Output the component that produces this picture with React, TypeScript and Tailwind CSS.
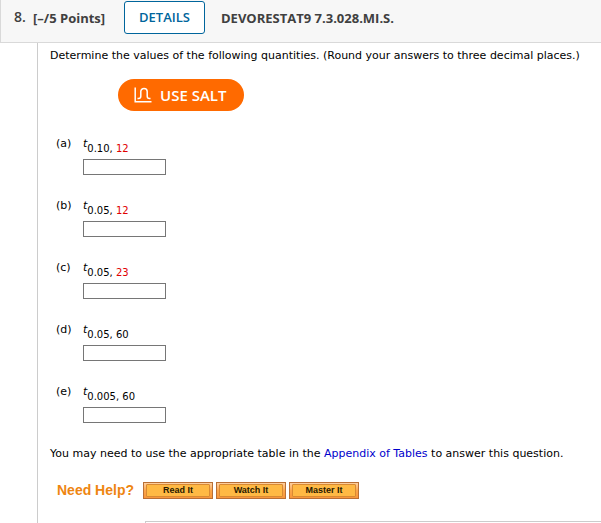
import { useId } from "react";

type Part = {
  label: string;
  alpha: string;
  df: string;
  randomized?: boolean;
};

const parts: Part[] = [
  { label: "a", alpha: "0.10", df: "12", randomized: true },
  { label: "b", alpha: "0.05", df: "12", randomized: true },
  { label: "c", alpha: "0.05", df: "23", randomized: true },
  { label: "d", alpha: "0.05", df: "60" },
  { label: "e", alpha: "0.005", df: "60" },
];

const helpLinks = ["Read It", "Watch It", "Master It"];

function CurveIcon() {
  return (
    <svg
      className="mb-px h-4 w-[18px]"
      viewBox="0 0 18 16"
      fill="none"
      stroke="currentColor"
      strokeWidth="1.5"
      aria-hidden
    >
      <path d="M1.2 0.5v14.3H17.5" />
      <path d="M3.5 11.5h1c1.600 0 2.300-.8 2.300-2.300V4.600C6.800 2.700 8.200 1.500 10 1.500s3.200 1.200 3.200 3.100v4.600c0 1.500.7 2.300 2.300 2.300h1" />
    </svg>
  );
}

function QuestionHeader() {
  return (
    <header className="flex h-[43px] items-start border-b border-l border-[#d9d9d9] bg-[#f7f7f7] pt-px pl-[13px] font-['Open_Sans',sans-serif] text-[13px] font-bold text-[#404040]">
      <span className="w-[19px] text-[14px] leading-8 font-semibold">8.</span>
      <span className="w-[91px] leading-[34px]">[–/5 Points]</span>
      <button
        type="button"
        className="h-[33px] w-[81px] rounded-[3px] border border-[#00659c] bg-white pt-px text-[13px] font-semibold text-[#00659c]"
      >
        DETAILS
      </button>
      <h1 className="ml-4 leading-[34px]">DEVORESTAT9 7.3.028.MI.S.</h1>
    </header>
  );
}

function AnswerPart({ label, alpha, df, randomized }: Part) {
  const id = useId();
  return (
    <div className="flex h-[62px]">
      <label htmlFor={id} className="w-[27px] leading-4">
        ({label})
      </label>
      <div>
        <div className="flex h-[23px] leading-4">
          <i>t</i>
          <sub className="bottom-0 pt-[5px] text-[10px] leading-4">
            {alpha}, <span className={randomized ? "text-[#e00000]" : ""}>{df}</span>
          </sub>
        </div>
        <input id={id} type="text" className="block h-4 w-[83px] border border-[#767676] bg-white px-1 text-[11px]" />
      </div>
    </div>
  );
}

function HelpButton({ text }: { text: string }) {
  return (
    <button
      type="button"
      className="h-[17px] w-[70px] border border-[#b96f35] bg-[#f9a040] bg-linear-to-b from-[#fdd0a0] via-[#fba64a] to-[#f9963a] p-px font-['Liberation_Sans',Arial,sans-serif] text-[9px] leading-[11px] font-bold text-[#2a1a00]"
    >
      <span className="mx-px block rounded-[1px] border border-[#d98a33] bg-[#ffb944]">{text}</span>
    </button>
  );
}

export default function App() {
  return (
    <div className="min-h-screen bg-white font-['DejaVu_Sans',Verdana,sans-serif] text-[11px] text-black">
      <QuestionHeader />
      <main className="ml-[37px] min-h-[480px] border-l border-[#ccc] pt-[5px] pl-3">
        <p className="leading-4 whitespace-nowrap">
          Determine the values of the following quantities. (Round your answers to three decimal places.)
        </p>
        <button
          type="button"
          className="mt-[15px] ml-[68px] flex h-8 w-[126px] items-center gap-2 rounded-full bg-[#ff6a00] pl-4 font-['Open_Sans',sans-serif] text-[15px] leading-[30px] font-semibold text-white"
        >
          <CurveIcon />
          USE SALT
        </button>
        <div className="mt-[25px] pl-[6px]">
          {parts.map((part) => (
            <AnswerPart key={part.label} {...part} />
          ))}
        </div>
        <p className="leading-4 whitespace-nowrap">
          You may need to use the appropriate table in the{" "}
          <a href="#tables" className="text-[#0000cc]">
            Appendix of Tables
          </a>{" "}
          to answer this question.
        </p>
        <section className="mt-5 flex h-[17px] items-center gap-[3px] pl-[7px]">
          <h2 className="w-[83px] font-['Liberation_Sans',Arial,sans-serif] text-[14px] font-bold whitespace-nowrap text-[#ee8511]">
            Need Help?
          </h2>
          {helpLinks.map((text) => (
            <HelpButton key={text} text={text} />
          ))}
        </section>
        <hr className="mt-[22px] ml-[95px] h-[2px] border-t border-l border-[#ccc]" />
      </main>
    </div>
  );
}
